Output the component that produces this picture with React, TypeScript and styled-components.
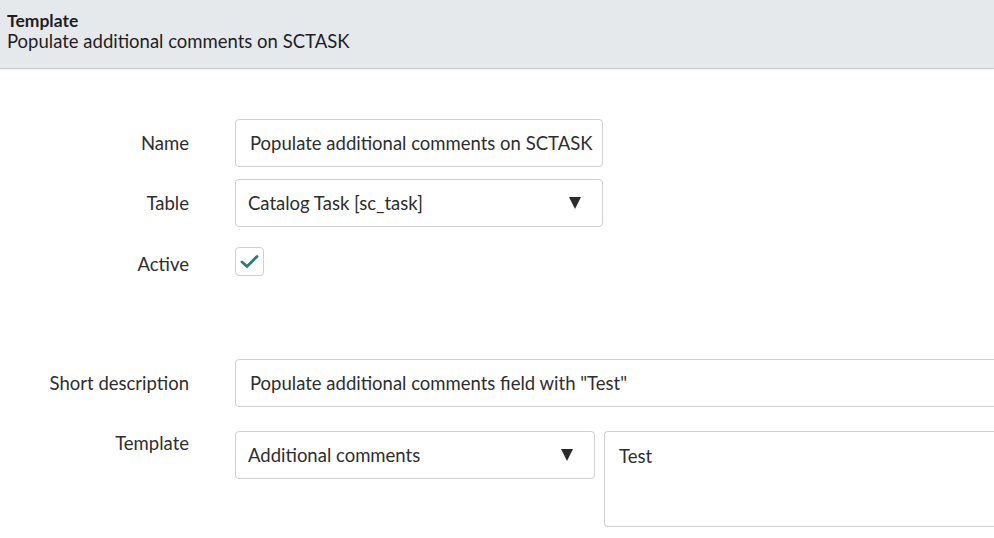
import React from "react";
import styled, { createGlobalStyle } from "styled-components";

const Global = createGlobalStyle`
  html, body { margin: 0; padding: 0; background: #ffffff; }
  body { font-family: Lato, "Open Sans", sans-serif; color: #2e2e2e; overflow: hidden; }
  * { box-sizing: border-box; }
`;

const Page = styled.div`
  width: 994px;
  height: 538px;
  overflow: hidden;
  background: #fff;
`;

const Header = styled.header`
  height: 69px;
  background: #e6e9ec;
  border-bottom: 1px solid #c9cbce;
  box-shadow: 0 1px 2px rgba(0, 0, 0, 0.06);
  padding: 10px 7px 0;
  color: #1e1e1e;
  font-size: 18.5px;
  line-height: 21px;
`;

const HeaderTitle = styled.div`
  font-weight: 700;
  font-size: 17.5px;
`;

const HeaderSub = styled.div``;

const Form = styled.div`
  padding-top: 50px;
  font-size: 18.5px;
`;

const Row = styled.div<{ $mb: number; $top?: boolean }>`
  display: grid;
  grid-template-columns: 190px 1fr;
  column-gap: 45px;
  align-items: ${(p) => (p.$top ? "start" : "center")};
  margin-bottom: ${(p) => p.$mb}px;
`;

const Label = styled.label<{ $offset?: number }>`
  text-align: right;
  line-height: 24px;
  padding-right: 1px;
  padding-top: ${(p) => p.$offset || 0}px;
  color: #2e2e2e;
  white-space: nowrap;
`;

const TextInput = styled.div<{ $width?: string }>`
  width: ${(p) => p.$width || "calc(100% + 20px)"};
  height: 48px;
  border: 1px solid #cfcfcf;
  border-radius: 4px;
  padding: 0 14px;
  display: flex;
  align-items: center;
  white-space: nowrap;
  overflow: hidden;
  color: #2e2e2e;
  background: #fff;
`;

const Select = styled.div<{ $width: number }>`
  width: ${(p) => p.$width}px;
  height: 48px;
  border: 1px solid #cfcfcf;
  border-radius: 4px;
  padding: 0 12px;
  display: flex;
  align-items: center;
  justify-content: space-between;
  color: #2e2e2e;
  background: #fff;
  flex-shrink: 0;
`;

const Caret = styled.span`
  width: 0;
  height: 0;
  border-left: 6px solid transparent;
  border-right: 6px solid transparent;
  border-top: 12px solid #2b2b2b;
  margin-right: 9px;
`;

const Checkbox = styled.div`
  width: 29px;
  height: 29px;
  border: 1px solid #cfcfcf;
  border-radius: 4px;
  display: flex;
  align-items: center;
  justify-content: center;
  background: #fff;
`;

const TemplateRow = styled.div`
  display: flex;
  gap: 9px;
  align-items: flex-start;
`;

const TextArea = styled.div`
  flex: 1;
  height: 96px;
  border: 1px solid #cfcfcf;
  border-right: none;
  border-radius: 4px 0 0 4px;
  padding: 12px 14px;
  line-height: 24px;
  color: #2e2e2e;
  margin-right: -20px;
`;

export default function App() {
  return (
    <Page>
      <Global />
      <Header>
        <HeaderTitle>Template</HeaderTitle>
        <HeaderSub>Populate additional comments on SCTASK</HeaderSub>
      </Header>
      <Form>
        <Row $mb={12}>
          <Label>Name</Label>
          <TextInput $width="368px">Populate additional comments on SCTASK</TextInput>
        </Row>

        <Row $mb={19}>
          <Label>Table</Label>
          <Select $width={368}>
            <span>Catalog Task [sc_task]</span>
            <Caret />
          </Select>
        </Row>

        <Row $mb={83}>
          <Label $offset={6}>Active</Label>
          <div>
            <Checkbox>
              <svg width="19" height="15" viewBox="0 0 19 15">
                <path d="M2 8 L7 12.5 L17 2.5" fill="none" stroke="#2b7d74" strokeWidth="2.8" strokeLinecap="round" strokeLinejoin="round" />
              </svg>
            </Checkbox>
          </div>
        </Row>

        <Row $mb={24}>
          <Label>Short description</Label>
          <TextInput>Populate additional comments field with "Test"</TextInput>
        </Row>

        <Row $mb={0} $top>
          <Label>Template</Label>
          <TemplateRow>
            <Select $width={360}>
              <span>Additional comments</span>
              <Caret />
            </Select>
            <TextArea>Test</TextArea>
          </TemplateRow>
        </Row>
      </Form>
    </Page>
  );
}
